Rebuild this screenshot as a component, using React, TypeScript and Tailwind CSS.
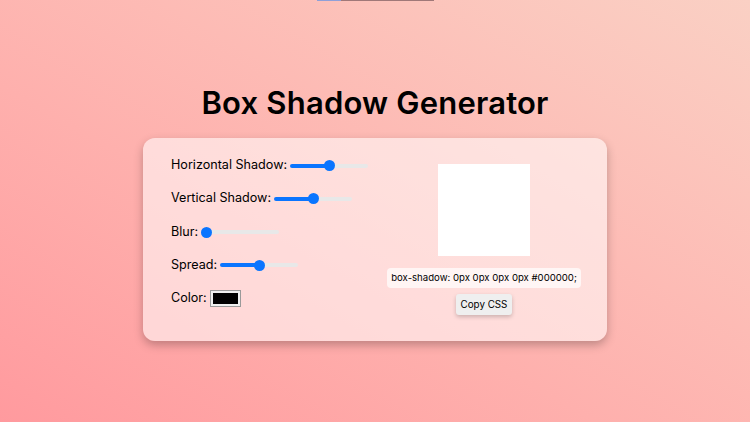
import { useState } from "react";

type Control = { label: string; min: number; max: number; value: number };

const initial: Control[] = [
  { label: "Horizontal Shadow:", min: -50, max: 50, value: 0 },
  { label: "Vertical Shadow:", min: -50, max: 50, value: 0 },
  { label: "Blur:", min: 0, max: 100, value: 0 },
  { label: "Spread:", min: -50, max: 50, value: 0 },
];

function Slider({ c, onChange }: { c: Control; onChange: (v: number) => void }) {
  const pct = ((c.value - c.min) / (c.max - c.min)) * 100;
  return (
    <input
      type="range"
      min={c.min}
      max={c.max}
      value={c.value}
      onChange={(e) => onChange(Number(e.target.value))}
      className="ml-[3px] h-[4px] w-[78px] cursor-pointer appearance-none rounded-full outline-none [&::-webkit-slider-thumb]:h-[11px] [&::-webkit-slider-thumb]:w-[11px] [&::-webkit-slider-thumb]:appearance-none [&::-webkit-slider-thumb]:rounded-full [&::-webkit-slider-thumb]:bg-[#0a75ff]"
      style={{
        background: `linear-gradient(to right, #0a75ff 0%, #0a75ff ${pct}%, #e8e8e8 ${pct}%, #e8e8e8 100%)`,
      }}
    />
  );
}

export default function App() {
  const [controls, setControls] = useState(initial);
  const [color, setColor] = useState("#000000");

  const [h, v, b, s] = controls.map((c) => c.value);
  const css = `box-shadow: ${h}px ${v}px ${b}px ${s}px ${color};`;

  function update(i: number, val: number) {
    setControls((prev) => prev.map((c, j) => (j === i ? { ...c, value: val } : c)));
  }

  return (
    <div
      className="min-h-[422px] w-full bg-gradient-to-tr from-[#ff9a9e] to-[#fad0c4] text-black"
      style={{ fontFamily: "Inter, 'Noto Sans', sans-serif" }}
    >
      <div className="mx-auto flex h-px w-[117px]">
        <div className="w-[24px] bg-[#8fa0d8]" />
        <div className="flex-1 bg-[#a07878]" />
      </div>

      <h1 className="pt-[82px] text-center text-[31px] font-semibold leading-[40px] tracking-[0.2px]">
        Box Shadow Generator
      </h1>

      <div className="mx-auto mt-[15px] flex h-[203px] w-[464px] items-start rounded-[12px] bg-white/55 pl-[28px] pt-[19px] shadow-[0_4px_10px_rgba(0,0,0,0.25)]">
        <div className="flex w-[217px] flex-col gap-[16.3px]">
          {controls.map((c, i) => (
            <div key={c.label} className="flex h-[17px] items-center text-[12.6px]">
              <span>{c.label}</span>
              <Slider c={c} onChange={(val) => update(i, val)} />
            </div>
          ))}
          <div className="flex h-[17px] items-center text-[12.6px]">
            <span>Color:</span>
            <label className="ml-[3px] flex h-[17px] w-[31px] items-center justify-center border border-[#9a9a9a] bg-[#efefef] p-[2px]">
              <span className="h-full w-full" style={{ background: color }} />
              <input
                type="color"
                value={color}
                onChange={(e) => setColor(e.target.value)}
                className="hidden"
              />
            </label>
          </div>
        </div>

        <div className="mt-[7px] flex w-[192px] flex-col items-center">
          <div
            className="h-[92px] w-[92px] bg-white"
            style={{ boxShadow: `${h}px ${v}px ${b}px ${s}px ${color}` }}
          />
          <div className="mt-[12px] whitespace-nowrap rounded-[4px] bg-white/70 px-[4px] py-[3px] text-[9.6px] leading-[14px]">
            {css}
          </div>
          <button
            onClick={() => navigator.clipboard?.writeText(css)}
            className="mt-[6px] rounded-[3px] bg-[#efefef] px-[5px] py-[3px] text-[9.8px] leading-[15px] shadow-[0_2px_4px_rgba(0,0,0,0.2)]"
          >
            Copy CSS
          </button>
        </div>
      </div>
    </div>
  );
}
